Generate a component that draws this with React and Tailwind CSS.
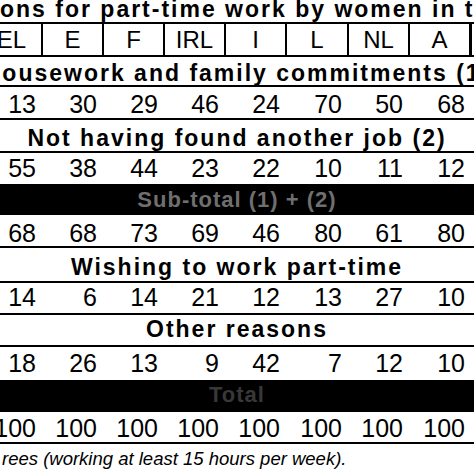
import React from "react";

const cols = "grid grid-cols-[61px_61px_61px_61px_61px_62px_61px_62px_61px] ml-[-18px] w-[551px]";

function NumRow({ values, cls }) {
  const cells = [...values, ""];
  return (
    <div className={cls}>
      <div className={cols}>
        {cells.map((v, i) => (
          <div key={i} className="text-right pr-[7px] text-[25px] leading-none">
            {v}
          </div>
        ))}
      </div>
    </div>
  );
}

function CatRow({ text, cls }) {
  return (
    <div className={cls}>
      <span className="shrink-0 font-bold text-[23px] leading-none tracking-[2px]">{text}</span>
    </div>
  );
}

export default function App() {
  const heads = ["EL", "E", "F", "IRL", "I", "L", "NL", "A", ""];
  return (
    <div className="w-[474px] h-[474px] overflow-hidden bg-white text-black font-['Liberation_Sans',Arial,Helvetica,sans-serif]">
      <div className="h-[22px] whitespace-nowrap font-bold text-[23px] leading-[18px] tracking-[2px]">
        ons for part-time work by women in t
      </div>

      <div className="h-[35px] border-t-2 border-b-2 border-black">
        <div className={cols + " h-full"}>
          {heads.map((h, i) => (
            <div
              key={i}
              className={
                i === 7
                  ? "border-r-[3px] border-black text-center text-[24px] leading-none pt-[4px]"
                  : "border-r-2 border-black text-center text-[24px] leading-none pt-[4px]"
              }
            >
              {h}
            </div>
          ))}
        </div>
      </div>

      <CatRow
        text="Housework and family commitments (1)"
        cls="h-[30px] border-b-2 border-black flex justify-center whitespace-nowrap pt-[5px]"
      />
      <NumRow values={[13, 30, 29, 46, 24, 70, 50, 68]} cls="h-[33px] border-b-2 border-black pt-[5px]" />

      <CatRow
        text="Not having found another job (2)"
        cls="h-[33px] border-b-2 border-black flex justify-center whitespace-nowrap pt-[7px]"
      />
      <NumRow values={[55, 38, 44, 23, 22, 10, 11, 12]} cls="h-[31px] pt-[3px]" />

      <div className="h-[31px] bg-black flex justify-center whitespace-nowrap pt-[5px]">
        <span className="font-bold text-[22px] leading-none tracking-[1px] text-[#6f6f6f]">Sub-total (1) + (2)</span>
      </div>

      <NumRow values={[68, 68, 73, 69, 46, 80, 61, 80]} cls="h-[33px] border-b-2 border-black pt-[6px]" />

      <CatRow
        text="Wishing to work part-time"
        cls="h-[35px] border-b-2 border-black flex justify-center whitespace-nowrap pt-[8px]"
      />
      <NumRow values={[14, 6, 14, 21, 12, 13, 27, 10]} cls="h-[32px] border-b-2 border-black pt-[2px]" />

      <CatRow
        text="Other reasons"
        cls="h-[32px] border-b-2 border-black flex justify-center whitespace-nowrap pt-[3px]"
      />
      <NumRow values={[18, 26, 13, 9, 42, 7, 12, 10]} cls="h-[33px] pt-[4px]" />

      <div className="h-[32px] bg-black flex justify-center whitespace-nowrap pt-[4px]">
        <span className="font-bold text-[22px] leading-none tracking-[1px] text-[#383838]">Total</span>
      </div>

      <NumRow values={[100, 100, 100, 100, 100, 100, 100, 100]} cls="h-[32px] border-b-2 border-black pt-[4px]" />

      <div className="h-[30px] whitespace-nowrap italic text-[18.5px] leading-none pt-[6px] pl-[2px]">
        rees (working at least 15 hours per week).
      </div>
    </div>
  );
}
